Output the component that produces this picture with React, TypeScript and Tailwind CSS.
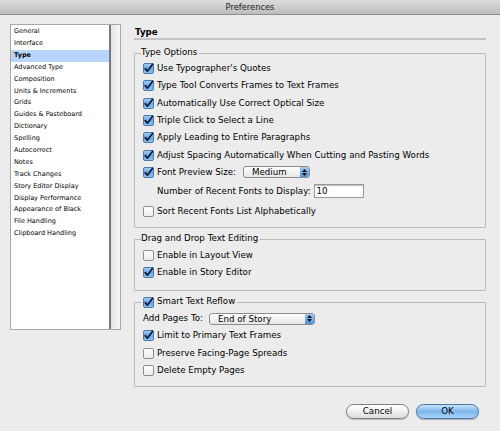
import React from 'react';

const font = { fontFamily: '"DejaVu Sans", "Liberation Sans", sans-serif' };

const sections = [
    'General',
    'Interface',
    'Type',
    'Advanced Type',
    'Composition',
    'Units & Increments',
    'Grids',
    'Guides & Pasteboard',
    'Dictionary',
    'Spelling',
    'Autocorrect',
    'Notes',
    'Track Changes',
    'Story Editor Display',
    'Display Performance',
    'Appearance of Black',
    'File Handling',
    'Clipboard Handling',
];

function Check({ on }: { on: boolean }) {
    return (
        <svg width="11" height="11" viewBox="0 0 11 11" className="shrink-0">
            <defs>
                <linearGradient id="aquaOn" x1="0" y1="0" x2="0" y2="1">
                    <stop offset="0" stopColor="#a9d0f5" />
                    <stop offset="0.5" stopColor="#6aa8e6" />
                    <stop offset="1" stopColor="#8cc4f4" />
                </linearGradient>
                <linearGradient id="aquaOff" x1="0" y1="0" x2="0" y2="1">
                    <stop offset="0" stopColor="#ffffff" />
                    <stop offset="1" stopColor="#ececec" />
                </linearGradient>
            </defs>
            <rect
                x="0.5"
                y="0.5"
                width="10"
                height="10"
                rx="1.5"
                fill={on ? 'url(#aquaOn)' : 'url(#aquaOff)'}
                stroke={on ? '#4f79a8' : '#8e8e8e'}
            />
            {on && (
                <path d="M2.3 5.6 L4.4 8.2 L9.6 1.2" fill="none" stroke="#0d1a33" strokeWidth="1.7" strokeLinecap="round" strokeLinejoin="round" />
            )}
        </svg>
    );
}

function Row({ on, label, className = 'h-[17.3px]' }: { on: boolean; label: string; className?: string }) {
    return (
        <div className={`flex items-center gap-[3px] ${className}`}>
            <Check on={on} />
            <span>{label}</span>
        </div>
    );
}

function Popup({ value, width }: { value: string; width: string }) {
    return (
        <div className={`flex h-[12px] items-stretch rounded-[3px] border border-[#8d8d8d] bg-gradient-to-b from-white to-[#e6e6e6] ${width}`}>
            <span className="flex-1 pl-[8px] leading-[10px]">{value}</span>
            <span className="flex w-[9px] flex-col items-center justify-center gap-[1px] rounded-r-[2px] bg-gradient-to-b from-[#9fcbf3] to-[#4f93db]">
                <svg width="5" height="3" viewBox="0 0 5 3"><path d="M0 3 L2.5 0 L5 3 Z" fill="#111" /></svg>
                <svg width="5" height="3" viewBox="0 0 5 3"><path d="M0 0 L2.5 3 L5 0 Z" fill="#111" /></svg>
            </span>
        </div>
    );
}

function Group({ legend, className, children }: { legend: React.ReactNode; className: string; children: React.ReactNode }) {
    return (
        <div className={`relative rounded-[1px] border border-[#b9b9b9] pl-[8px] ${className}`}>
            <div className="absolute left-[6px] top-[-7px] flex h-[12px] items-center bg-[#ececec] pr-[2px]">{legend}</div>
            {children}
        </div>
    );
}

export default function App() {
    return (
        <div className="h-[431px] w-[500px] overflow-hidden bg-[#ececec] text-[8.7px] text-black" style={font}>
            <div className="flex h-[15px] items-center justify-center border-b border-[#8f8f8f] bg-gradient-to-b from-[#dcdcdc] to-[#bcbcbc] text-[8.3px] text-[#222]">
                Preferences
            </div>

            <div className="flex pl-[10px] pt-[9px]">
                <div className="flex h-[306px] w-[111px] border border-[#a8a8a8] bg-white">
                    <div className="flex-1 border-r-2 border-[#7a7a7a] pt-[1px] text-[6.5px]">
                        {sections.map((s) => (
                            <div
                                key={s}
                                className={`flex h-[11.9px] items-center pl-[3px] ${s === 'Type' ? 'bg-[#b8d6fb] font-bold' : ''}`}
                            >
                                {s}
                            </div>
                        ))}
                    </div>
                    <div className="w-[9px] bg-gradient-to-r from-[#e4e4e4] to-[#f7f7f7]" />
                </div>

                <div className="ml-[13px] w-[352px]">
                    <div className="mt-[3px] h-[13px] border-b-2 border-[#c2c2c2] pl-[1px] font-bold leading-[10px]">Type</div>

                    <Group legend={<span>Type Options</span>} className="mt-[13px] h-[175px] pt-[6px]">
                        <Row on label="Use Typographer's Quotes" />
                        <Row on label="Type Tool Converts Frames to Text Frames" />
                        <Row on label="Automatically Use Correct Optical Size" />
                        <Row on label="Triple Click to Select a Line" />
                        <Row on label="Apply Leading to Entire Paragraphs" />
                        <Row on label="Adjust Spacing Automatically When Cutting and Pasting Words" />
                        <div className="flex h-[17.3px] items-center gap-[3px]">
                            <Check on />
                            <span>Font Preview Size:</span>
                            <span className="ml-[4px]">
                                <Popup value="Medium" width="w-[67px]" />
                            </span>
                        </div>
                        <div className="flex h-[20px] items-center pl-[14px]">
                            <span>Number of Recent Fonts to Display:</span>
                            <span className="ml-[3px] flex h-[14px] w-[50px] items-center border border-[#9a9a9a] bg-white pl-[2px] shadow-[inset_0_1px_1px_#bbb]">
                                10
                            </span>
                        </div>
                        <Row on={false} label="Sort Recent Fonts List Alphabetically" className="h-[20px]" />
                    </Group>

                    <Group legend={<span>Drag and Drop Text Editing</span>} className="mt-[11px] h-[52px] pt-[7px]">
                        <Row on={false} label="Enable in Layout View" />
                        <Row on label="Enable in Story Editor" />
                    </Group>

                    <Group
                        legend={
                            <span className="flex items-center gap-[3px] pl-[2px]">
                                <Check on />
                                <span>Smart Text Reflow</span>
                            </span>
                        }
                        className="mt-[11px] h-[85px] pt-[7px]"
                    >
                        <div className="flex h-[17.3px] items-center">
                            <span>Add Pages To:</span>
                            <span className="ml-[6px]">
                                <Popup value="End of Story" width="w-[106px]" />
                            </span>
                        </div>
                        <Row on label="Limit to Primary Text Frames" />
                        <Row on={false} label="Preserve Facing-Page Spreads" />
                        <Row on={false} label="Delete Empty Pages" />
                    </Group>
                </div>
            </div>

            <div className="mt-[17px] flex justify-end gap-[7px] pr-[21px]">
                <button className="flex h-[15px] w-[63px] items-center justify-center rounded-full border border-[#7d7d7d] bg-gradient-to-b from-white via-[#f0f0f0] to-[#dcdcdc] text-[8.7px] shadow-[0_1px_1px_#bbb]">
                    Cancel
                </button>
                <button className="flex h-[15px] w-[63px] items-center justify-center rounded-full border border-[#4a78a8] bg-gradient-to-b from-[#c7e2fa] via-[#7fb8ec] to-[#a7d4f8] text-[8.7px] shadow-[0_1px_1px_#aaa]">
                    OK
                </button>
            </div>
        </div>
    );
}
